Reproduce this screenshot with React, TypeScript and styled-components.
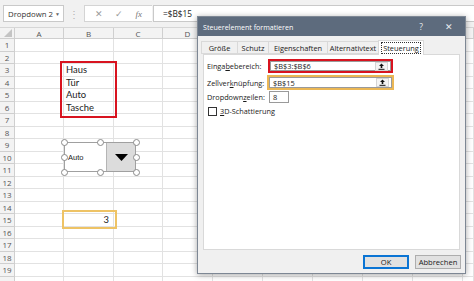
import React from 'react';
import styled, { createGlobalStyle } from 'styled-components';

const Global = createGlobalStyle`
  html, body { margin: 0; padding: 0; background: #fff; }
  body { font-family: "Noto Sans", "Liberation Sans", sans-serif; }
  * { box-sizing: border-box; }
`;

const Page = styled.div`
  position: relative;
  width: 474px;
  height: 281px;
  overflow: hidden;
  background: #fff;
`;

/* ---------- formula toolbar ---------- */
const Toolbar = styled.div`
  height: 28px;
  background: #f1f1f1;
  display: flex;
  align-items: flex-start;
  padding-top: 5px;
  border-bottom: 1px solid #d6d6d6;
`;

const NameBox = styled.div`
  margin-left: 3px;
  width: 61px;
  height: 17px;
  background: #fff;
  border: 1px solid #c9c9c9;
  display: flex;
  align-items: center;
  justify-content: space-between;
  padding: 0 3px 0 4px;
  font-family: "Open Sans", "Noto Sans", sans-serif;
  font-size: 7.8px;
  color: #333;
  white-space: nowrap;
`;

const Caret = styled.span`
  font-size: 5px;
  color: #666;
`;

const Grip = styled.div`
  width: 20px;
  height: 17px;
  display: flex;
  align-items: center;
  justify-content: center;
  color: #b0b0b0;
  font-size: 10px;
`;

const FxBox = styled.div`
  width: 68px;
  height: 17px;
  background: #fff;
  border: 1px solid #d4d4d4;
  border-right: none;
  display: flex;
  align-items: center;
  justify-content: space-around;
  padding: 0 4px;
  color: #9a9a9a;
  font-size: 9px;
`;

const FxIcon = styled.span`
  font-family: "Liberation Serif", serif;
  font-style: italic;
  font-size: 9px;
  color: #777;
`;

const FormulaBar = styled.div`
  flex: 1;
  height: 17px;
  margin-left: 1px;
  background: #fff;
  border: 1px solid #c9c9c9;
  border-right: none;
  display: flex;
  align-items: center;
  padding-left: 9px;
  font-family: "Open Sans", "Noto Sans", sans-serif;
  font-size: 8.3px;
  color: #222;
`;

/* ---------- sheet grid ---------- */
const Sheet = styled.div`
  display: grid;
  grid-template-columns: 15px 49px 50px 49px repeat(6, 50px) 11px;
  grid-template-rows: 11px repeat(20, 12.5px);
`;

const Cell = styled.div<{ $kind?: 'col' | 'row' | 'corner'; $align?: 'left' | 'right' | 'center' }>`
  border-right: 1px solid ${(p) => (p.$kind ? '#cfcfcf' : '#e2e2e2')};
  border-bottom: 1px solid ${(p) => (p.$kind ? '#cfcfcf' : '#e2e2e2')};
  background: ${(p) => (p.$kind ? '#f3f3f3' : '#fff')};
  display: flex;
  align-items: center;
  justify-content: ${(p) =>
    p.$kind ? 'center' : p.$align === 'right' ? 'flex-end' : 'flex-start'};
  padding: 0 ${(p) => (p.$kind ? 0 : 4)}px 0 ${(p) => (p.$kind ? 0 : 2)}px;
  font-family: ${(p) => (p.$kind ? '"Open Sans", "Noto Sans", sans-serif' : 'Lato, "Liberation Sans", sans-serif')};
  font-size: ${(p) => (p.$kind ? '8px' : '9.4px')};
  color: ${(p) => (p.$kind ? '#555' : '#222')};
  overflow: hidden;
  white-space: nowrap;
  position: relative;
`;

const CornerTri = styled.svg`
  position: absolute;
  right: 2px;
  bottom: 1px;
`;

/* ---------- overlays on the sheet ---------- */
const Highlight = styled.div<{ $color: string; $x: number; $y: number; $w: number; $h: number }>`
  position: absolute;
  left: ${(p) => p.$x}px;
  top: ${(p) => p.$y}px;
  width: ${(p) => p.$w}px;
  height: ${(p) => p.$h}px;
  border: 2px solid ${(p) => p.$color};
  pointer-events: none;
`;

const Combo = styled.div`
  position: absolute;
  left: 64px;
  top: 142px;
  width: 72px;
  height: 30px;
  border: 1px solid #a0a0a0;
  background: #fff;
  display: flex;
`;

const ComboText = styled.div`
  flex: 1;
  display: flex;
  align-items: center;
  padding-left: 3px;
  font-family: "Liberation Sans", sans-serif;
  font-size: 7.5px;
  color: #222;
`;

const ComboButton = styled.div`
  width: 29px;
  background: #dcdcdc;
  border-left: 1px solid #b5b5b5;
  display: flex;
  align-items: center;
  justify-content: center;
`;

const Handle = styled.div<{ $x: number; $y: number }>`
  position: absolute;
  left: ${(p) => p.$x - 3.5}px;
  top: ${(p) => p.$y - 3.5}px;
  width: 7px;
  height: 7px;
  border-radius: 50%;
  border: 1px solid #8a8a8a;
  background: #fff;
`;

/* ---------- dialog ---------- */
const Dialog = styled.div`
  position: absolute;
  left: 197px;
  top: 16px;
  width: 269px;
  height: 258px;
  background: #f0f0f0;
  border: 1px solid #7d8794;
  box-shadow: 0 1px 6px rgba(0, 0, 0, 0.35);
  display: flex;
  flex-direction: column;
  font-family: "Open Sans", "Noto Sans", sans-serif;
  font-size: 7.3px;
  color: #1a1a1a;
`;

const TitleBar = styled.div`
  height: 19px;
  background: #5d6b7d;
  color: #fff;
  display: flex;
  align-items: center;
  padding-left: 5px;
  font-size: 7.1px;
`;

const Title = styled.div`
  flex: 1;
`;

const TitleBtn = styled.div<{ $w: number }>`
  width: ${(p) => p.$w}px;
  text-align: center;
  color: #e8ecf0;
  font-size: 8.5px;
`;

const Tabs = styled.div`
  display: flex;
  align-items: flex-end;
  height: 18px;
  padding-left: 4px;
  font-size: 7.4px;
`;

const Tab = styled.div<{ $active?: boolean; $w: number }>`
  width: ${(p) => p.$w}px;
  height: ${(p) => (p.$active ? 15 : 13)}px;
  background: ${(p) => (p.$active ? '#fff' : '#f0f0f0')};
  border: 1px solid #d9d9d9;
  border-bottom: ${(p) => (p.$active ? 'none' : '1px solid #d9d9d9')};
  margin-left: -1px;
  display: flex;
  align-items: center;
  justify-content: center;
  position: relative;
  z-index: ${(p) => (p.$active ? 2 : 1)};
  margin-bottom: ${(p) => (p.$active ? -1 : 0)}px;
`;

const Focus = styled.span`
  outline: 1px dotted #333;
  padding: 0 1px;
`;

const Panel = styled.div`
  margin-left: 5px;
  width: 257px;
  height: 196px;
  background: #fff;
  border: 1px solid #d9d9d9;
  padding: 3px 0 0 3px;
  display: flex;
  flex-direction: column;
`;

const FieldRow = styled.div<{ $h: number; $mt?: number }>`
  display: flex;
  align-items: center;
  height: ${(p) => p.$h}px;
  margin-top: ${(p) => p.$mt ?? 0}px;
`;

const Label = styled.div`
  width: 60px;
  white-space: nowrap;
`;

const Ring = styled.div<{ $color: string; $w: number; $h: number; $ml?: number }>`
  width: ${(p) => p.$w}px;
  height: ${(p) => p.$h}px;
  margin-left: ${(p) => p.$ml ?? 0}px;
  border: 2px solid ${(p) => p.$color};
  display: flex;
`;

const Input = styled.div<{ $w?: number; $ml?: number }>`
  ${(p) => (p.$w ? `width: ${p.$w}px;` : 'flex: 1;')}
  margin-left: ${(p) => p.$ml ?? 0}px;
  height: 100%;
  background: #fff;
  border: 1px solid #9a9a9a;
  display: flex;
  align-items: center;
  padding-left: 3px;
  font-size: 7.4px;
`;

const InputText = styled.div`
  flex: 1;
`;

const RefBtn = styled.div`
  width: 13px;
  height: 9px;
  margin-right: 2px;
  border: 1px solid #d4d4d4;
  background: #f4f4f4;
  display: flex;
  align-items: center;
  justify-content: center;
`;

const CheckRow = styled.div`
  display: flex;
  align-items: center;
  margin-top: 3px;
  margin-left: 1px;
  gap: 3px;
`;

const Box = styled.div`
  width: 9px;
  height: 9px;
  border: 1px solid #333;
  background: #fff;
`;

const Footer = styled.div`
  flex: 1;
  display: flex;
  justify-content: flex-end;
  align-items: flex-start;
  padding: 5px 4px 0 0;
  gap: 6px;
  font-size: 7.6px;
`;

const Button = styled.div<{ $primary?: boolean }>`
  width: 46px;
  height: 14px;
  background: #e1e1e1;
  border: 1px solid ${(p) => (p.$primary ? '#0a74d4' : '#adadad')};
  box-shadow: ${(p) => (p.$primary ? 'inset 0 0 0 1px #0a74d4' : 'none')};
  display: flex;
  align-items: center;
  justify-content: center;
`;

const U = styled.span`
  text-decoration: underline;
`;

const RefIcon = () => (
  <svg width="7" height="7" viewBox="0 0 7 7">
    <path d="M3.5 0.5 L6 3 H4.3 V5 H2.7 V3 H1 Z" fill="#111" />
    <rect x="0.5" y="5.8" width="6" height="1" fill="#111" />
  </svg>
);

const cols = ['A', 'B', 'C', 'D', 'E', 'F', 'G', 'H', 'I', 'J'];
const visibleHeaders = new Set(['A', 'B', 'C', 'D']);
const bValues: Record<number, string> = { 3: 'Haus', 4: 'Tür', 5: 'Auto', 6: 'Tasche' };

export default function App() {
  const rows = Array.from({ length: 20 }, (_, i) => i + 1);
  const handles: [number, number][] = [
    [64, 142], [100, 142], [136, 142],
    [64, 157], [136, 157],
    [64, 172], [100, 172], [136, 172],
  ];
  return (
    <Page>
      <Global />
      <Toolbar>
        <NameBox>
          <span>Dropdown 2</span>
          <Caret>▼</Caret>
        </NameBox>
        <Grip>⋮</Grip>
        <FxBox>
          <span>✕</span>
          <span>✓</span>
          <FxIcon>fx</FxIcon>
        </FxBox>
        <FormulaBar>=$B$15</FormulaBar>
      </Toolbar>
      <Sheet>
        <Cell $kind="corner">
          <CornerTri width="8" height="8" viewBox="0 0 8 8">
            <path d="M8 0 V8 H0 Z" fill="#c4c4c4" />
          </CornerTri>
        </Cell>
        {cols.map((c) => (
          <Cell key={c} $kind="col">{visibleHeaders.has(c) ? c : ''}</Cell>
        ))}
        {rows.map((r) => (
          <React.Fragment key={r}>
            <Cell $kind="row">{r}</Cell>
            {cols.map((c) => (
              <Cell key={c} $align={c === 'B' && r === 15 ? 'right' : 'left'}>
                {c === 'B' ? bValues[r] ?? (r === 15 ? '3' : '') : ''}
              </Cell>
            ))}
          </React.Fragment>
        ))}
      </Sheet>

      <Highlight $color="#d8131f" $x={60} $y={61} $w={57} $h={57} />
      <Highlight $color="#eec365" $x={62} $y={210} $w={55} $h={19} />

      <Combo>
        <ComboText>Auto</ComboText>
        <ComboButton>
          <svg width="13" height="7" viewBox="0 0 13 7">
            <path d="M0 0 H13 L6.5 7 Z" fill="#000" />
          </svg>
        </ComboButton>
      </Combo>
      {handles.map(([x, y]) => (
        <Handle key={`${x}-${y}`} $x={x} $y={y} />
      ))}

      <Dialog>
        <TitleBar>
          <Title>Steuerelement formatieren</Title>
          <TitleBtn $w={24}>?</TitleBtn>
          <TitleBtn $w={32}>✕</TitleBtn>
        </TitleBar>
        <Tabs>
          <Tab $w={37}>Größe</Tab>
          <Tab $w={32}>Schutz</Tab>
          <Tab $w={60}>Eigenschaften</Tab>
          <Tab $w={52}>Alternativtext</Tab>
          <Tab $w={46} $active>
            <Focus>Steuerung</Focus>
          </Tab>
        </Tabs>
        <Panel>
          <FieldRow $h={14} $mt={1}>
            <Label>Einga<U>b</U>ebereich:</Label>
            <Ring $color="#d8131f" $w={125} $h={14} $ml={1}>
              <Input>
                <InputText>$B$3:$B$6</InputText>
                <RefBtn><RefIcon /></RefBtn>
              </Input>
            </Ring>
          </FieldRow>
          <FieldRow $h={15} $mt={2}>
            <Label>Zellver<U>k</U>nüpfung:</Label>
            <Ring $color="#ebb755" $w={127} $h={15}>
              <Input>
                <InputText>$B$15</InputText>
                <RefBtn><RefIcon /></RefBtn>
              </Input>
            </Ring>
          </FieldRow>
          <FieldRow $h={12} $mt={1}>
            <Label>Dropdown<U>z</U>eilen:</Label>
            <Input $w={20} $ml={2}>8</Input>
          </FieldRow>
          <CheckRow>
            <Box />
            <span><U>3</U>D-Schattierung</span>
          </CheckRow>
        </Panel>
        <Footer>
          <Button $primary>OK</Button>
          <Button>Abbrechen</Button>
        </Footer>
      </Dialog>
    </Page>
  );
}
